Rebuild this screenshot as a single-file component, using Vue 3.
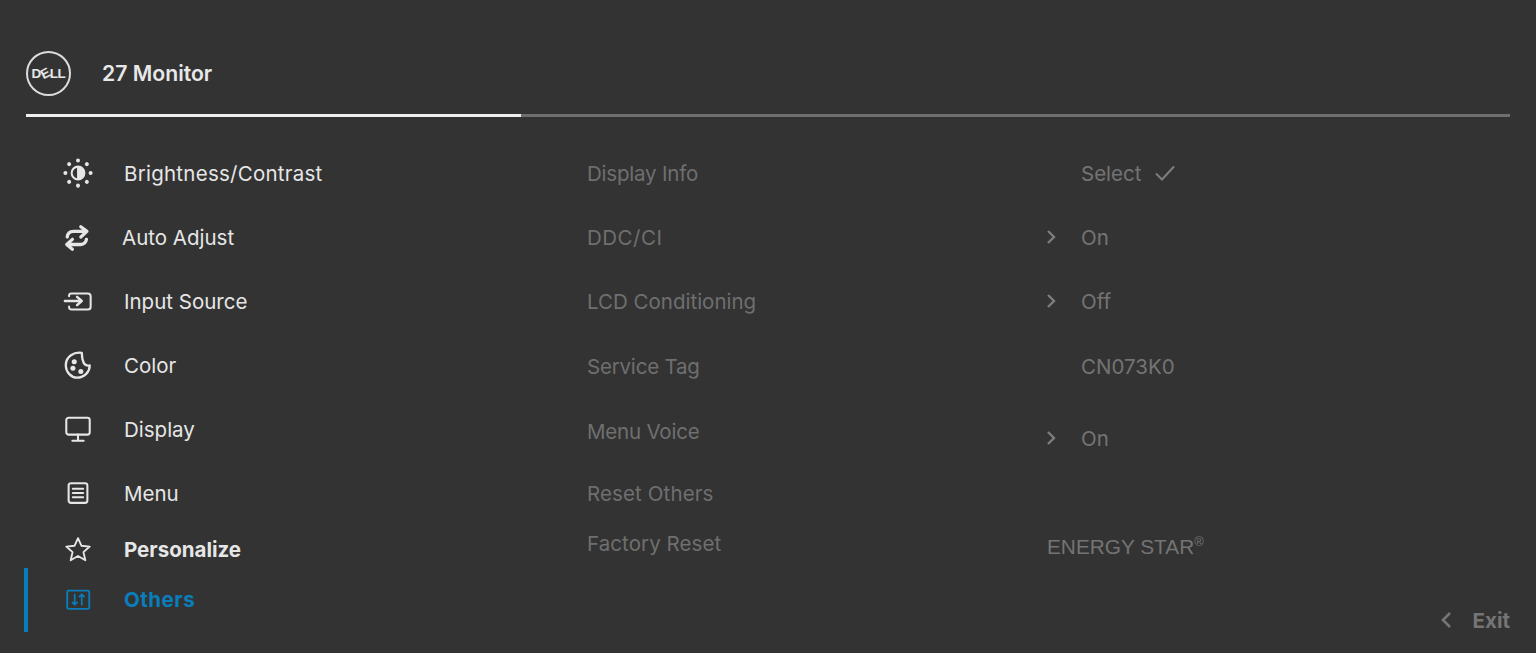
<script setup>
const menu = [
  { id: "brightness", label: "Brightness/Contrast", cls: "wide" },
  { id: "auto", label: "Auto Adjust", cls: "nudge" },
  { id: "input", label: "Input Source", cls: "" },
  { id: "color", label: "Color", cls: "" },
  { id: "display", label: "Display", cls: "" },
  { id: "menu", label: "Menu", cls: "" },
  { id: "star", label: "Personalize", cls: "bold short" },
  { id: "others", label: "Others", cls: "active shorter" },
];

const settings = [
  { label: "Display Info", cls: "tight" },
  { label: "DDC/CI", cls: "loose" },
  { label: "LCD Conditioning", cls: "" },
  { label: "Service Tag", cls: "low tight" },
  { label: "Menu Voice", cls: "lower tight" },
  { label: "Reset Others", cls: "tail" },
  { label: "Factory Reset", cls: "last" },
];
</script>

<template>
  <div class="osd">
    <header class="head">
      <div class="logo"><span>D<i>E</i>LL</span></div>
      <h1>27 Monitor</h1>
    </header>
    <div class="rule"><div class="rule_on"></div><div class="rule_off"></div></div>

    <main class="columns">
      <nav class="side">
        <div v-for="item in menu" :key="item.id" class="side_row" :class="item.cls">
          <svg class="icon" viewBox="0 0 32 32" fill="none" stroke="currentColor" stroke-width="2" stroke-linecap="round" stroke-linejoin="round">
            <g v-if="item.id === 'brightness'">
              <circle cx="16" cy="16" r="6.8" stroke-width="2.2" />
              <path d="M16 9.5a6.5 6.5 0 0 1 0 13z" fill="currentColor" />
              <path stroke-width="4.2" d="M16 2.5v.1M16 29.4v.1M2.5 16h.1M29.4 16h.1M6.5 6.5l.1.1M25.4 25.4l.1.1M6.5 25.5l.1-.1M25.4 6.6l.1-.1" />
            </g>
            <g v-else-if="item.id === 'auto'" stroke-width="3.5">
              <path d="M19 5l6.5 5-6.5 6M25 10H11c-3.5 0-6 2.5-6.5 6" />
              <path d="M10 29l-6-5 6-5.5M4.5 24H19c3.5 0 5.500-2.5 6-5.5" />
            </g>
            <g v-else-if="item.id === 'input'" stroke-width="2.2">
              <path d="M6.5 11V10c0-1.5 1-2 2.5-2h17.5c1.8 0 3 1 3 3v11c0 2-1.2 3-3 3H9c-1.5 0-2.5-.5-2.5-2v-1" />
              <path stroke-width="2.6" d="M2 16h18M15 11.5l5 4.500-5 4.500" />
            </g>
            <g v-else-if="item.id === 'color'" stroke-width="2.5">
              <path d="M20 3C12 1.5 3 7 3 16c0 8 6 13.5 12 13.5 8 0 13.5-6.5 13.500-13-3.500 1-6.500-1.500-7-4.500-1.500-3-1-6-1.500-9z" />
              <circle cx="12" cy="12.5" r="2.7" fill="currentColor" stroke="none" />
              <circle cx="10.6" cy="19.5" r="2.7" fill="currentColor" stroke="none" />
              <circle cx="19" cy="23" r="2.7" fill="currentColor" stroke="none" />
            </g>
            <g v-else-if="item.id === 'display'" stroke-width="2.2">
              <rect x="3.5" y="4" width="25" height="18" rx="2.5" />
              <path d="M16 22v6M10 28.5h12" />
            </g>
            <g v-else-if="item.id === 'menu'" stroke-width="2.2">
              <rect x="6" y="5.5" width="20" height="21" rx="2.5" />
              <path d="M10.5 11.5h11M10.5 16h11M10.5 20.5h11" />
            </g>
            <g v-else-if="item.id === 'star'">
              <path d="M16 4.5l3.6 8 8.9.9-6.7 5.9 2 8.7-7.800-4.500L8.200 28l2-8.700-6.700-5.900 8.900-.9z" />
            </g>
            <g v-else>
              <rect x="4.5" y="7" width="23.5" height="19.5" rx="1.5" />
              <path stroke-width="1.8" d="M12.5 11v11M10 19.5l2.5 2.5 2.5-2.500M20 22V11M17.5 13.500L20 11l2.500 2.500" />
            </g>
          </svg>
          <span class="side_label">{{ item.label }}</span>
        </div>
      </nav>

      <section class="mid">
        <div v-for="s in settings" :key="s.label" class="mid_row" :class="s.cls">{{ s.label }}</div>
      </section>

      <section class="values">
        <div class="val_row">
          <span class="chev"></span>
          <span class="val">Select</span>
          <svg class="check" viewBox="0 0 22 18" fill="none" stroke="currentColor" stroke-width="2"><path d="M2 9.5l6 6L20 2.5" /></svg>
        </div>
        <div class="val_row">
          <svg class="chev" viewBox="0 0 10 16" fill="none" stroke="currentColor" stroke-width="2.4"><path d="M2 2l6 6-6 6" /></svg>
          <span class="val">On</span>
        </div>
        <div class="val_row">
          <svg class="chev" viewBox="0 0 10 16" fill="none" stroke="currentColor" stroke-width="2.4"><path d="M2 2l6 6-6 6" /></svg>
          <span class="val">Off</span>
        </div>
        <div class="val_row tag"><span class="chev"></span><span class="val">CN073K0</span></div>
        <div class="val_row voice">
          <svg class="chev" viewBox="0 0 10 16" fill="none" stroke="currentColor" stroke-width="2.4"><path d="M2 2l6 6-6 6" /></svg>
          <span class="val">On</span>
        </div>
        <div class="energy">ENERGY STAR<sup>®</sup></div>
      </section>
    </main>

    <footer class="foot">
      <svg class="back" viewBox="0 0 12 18" fill="none" stroke="currentColor" stroke-width="2.6"><path d="M10 2L3 9l7 7" /></svg>
      <span>Exit</span>
    </footer>
  </div>
</template>

<style>
html, body {
  margin: 0;
  background: #333333;
  overflow: hidden;
}
</style>

<style scoped>
.osd {
  width: 1536px;
  height: 653px;
  background: #333333;
  font-family: Inter, "Liberation Sans", sans-serif;
  font-size: 20.5px;
  display: flex;
  flex-direction: column;
  position: relative;
  box-sizing: border-box;
  padding: 50px 26px 0 26px;
}

.head {
  display: flex;
  align-items: center;
  gap: 31px;
  height: 46px;
}

.logo {
  width: 45px;
  height: 45px;
  box-sizing: border-box;
  border: 2.5px solid #dcdcdc;
  border-radius: 50%;
  display: flex;
  align-items: center;
  justify-content: center;
  color: #e6e6e6;
  font-family: "Liberation Sans", sans-serif;
  font-weight: 700;
  font-size: 13.5px;
  letter-spacing: -0.3px;
}

.logo i {
  display: inline-block;
  font-style: normal;
  transform: rotate(-28deg);
}

.head h1 {
  margin: 0;
  font-size: 21.2px;
  font-weight: 600;
  color: #e8e8e8;
}

.rule {
  display: flex;
  margin-top: 18px;
  height: 3px;
}

.rule_on {
  width: 495px;
  background: #f0f0f0;
}

.rule_off {
  flex: 1;
  background: #6e6e6e;
}

.columns {
  display: flex;
  padding-top: 24px;
}

.side {
  width: 561px;
  display: flex;
  flex-direction: column;
}

.side_row {
  height: 64px;
  display: flex;
  align-items: center;
  gap: 31px;
  padding-left: 37px;
  color: #e6e6e6;
  position: relative;
}

.side_row.nudge {
  gap: 29px;
}

.side_row.wide .side_label {
  letter-spacing: 0.25px;
}

.side_row.short {
  height: 48px;
}

.side_row.shorter {
  height: 52px;
}

.side_row.bold .side_label {
  font-weight: 700;
}

.side_row.active {
  color: #0a7dbb;
}

.side_row.active .side_label {
  font-weight: 700;
  letter-spacing: 0.5px;
}

.side_row.active::before {
  content: "";
  position: absolute;
  left: -2px;
  top: -5px;
  width: 4px;
  height: 64px;
  background: #0a7dbb;
}

.icon {
  width: 30px;
  height: 30px;
  flex: none;
}

.mid {
  width: 459px;
  display: flex;
  flex-direction: column;
  color: #6f6f6f;
}

.mid_row {
  height: 64px;
  display: flex;
  align-items: center;
}

.mid_row.tight {
  letter-spacing: -0.2px;
}

.mid_row.loose {
  letter-spacing: 0.5px;
}

.mid_row.low {
  position: relative;
  top: 1px;
}

.mid_row.lower {
  position: relative;
  top: 2px;
}

.mid_row.tail {
  height: 60px;
  padding-top: 4px;
  box-sizing: border-box;
  letter-spacing: 0.12px;
}

.mid_row.last {
  height: 44px;
  letter-spacing: 0.08px;
}

.values {
  display: flex;
  flex-direction: column;
  color: #747474;
}

.val_row {
  height: 64px;
  display: flex;
  align-items: center;
  gap: 25px;
}

.val_row.tag {
  height: 66px;
}

.val_row.voice {
  height: 70px;
  padding-top: 8px;
  box-sizing: border-box;
}

.chev {
  width: 10px;
  height: 16px;
  flex: none;
  color: #7d7d7d;
}

.check {
  width: 22px;
  height: 18px;
  margin-left: -12px;
  color: #7d7d7d;
}

.energy {
  font-family: "Liberation Sans", sans-serif;
  font-size: 20.8px;
  margin: 66px 0 0 1px;
  line-height: 24px;
}

.energy sup {
  font-size: 13px;
  line-height: 0;
}

.foot {
  position: absolute;
  right: 26px;
  top: 608px;
  display: flex;
  align-items: center;
  gap: 21px;
  color: #757575;
  font-weight: 700;
  height: 24px;
}

.back {
  width: 12px;
  height: 18px;
}
</style>
